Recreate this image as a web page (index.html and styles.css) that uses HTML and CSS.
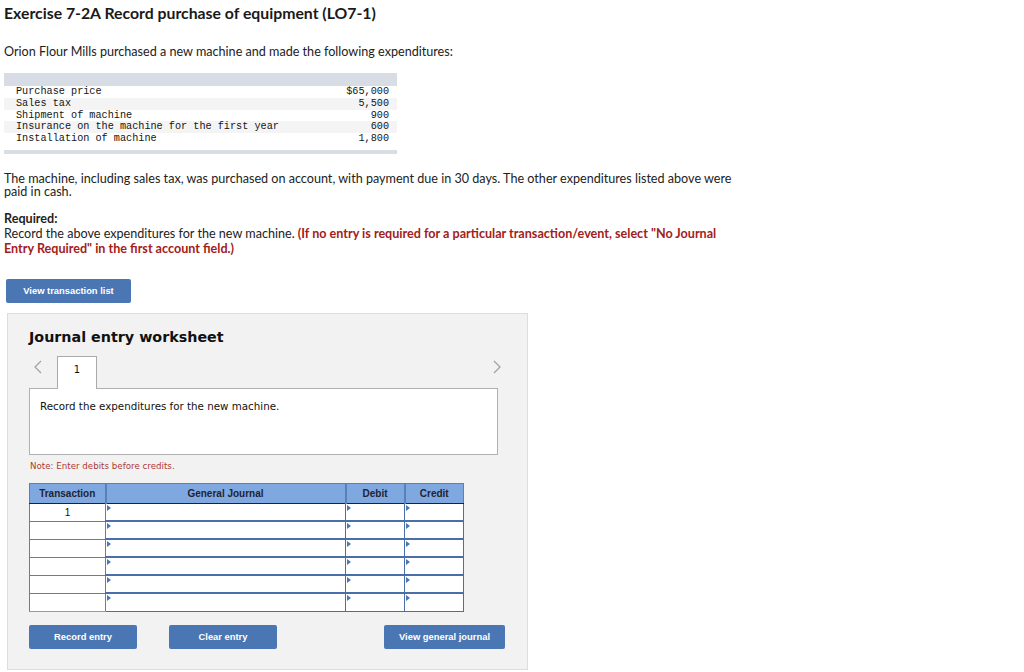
FILE: index.html
```html
<!DOCTYPE html>
<html lang="en">
<head>
<meta charset="utf-8">
<title>Exercise 7-2A Record purchase of equipment</title>
<link rel="stylesheet" href="styles.css">
</head>
<body>
<main class="page">
  <h1 class="title">Exercise 7-2A Record purchase of equipment (LO7-1)</h1>

  <p class="intro">Orion Flour Mills purchased a new machine and made the following expenditures:</p>

  <table class="costs">
    <thead><tr><th colspan="2"></th></tr></thead>
    <tbody>
      <tr><td>Purchase price</td><td class="amt">$65,000</td></tr>
      <tr><td>Sales tax</td><td class="amt">5,500</td></tr>
      <tr><td>Shipment of machine</td><td class="amt">900</td></tr>
      <tr><td>Insurance on the machine for the first year</td><td class="amt">600</td></tr>
      <tr><td>Installation of machine</td><td class="amt">1,800</td></tr>
    </tbody>
    <tfoot><tr><td colspan="2"></td></tr></tfoot>
  </table>

  <p class="body-text">The machine, including sales tax, was purchased on account, with payment due in 30 days. The other expenditures listed above were paid in cash.</p>

  <div class="body-text required">
    <strong class="req-label">Required:</strong>
    <p class="req-text">Record the above expenditures for the new machine. <span class="hint">(If no entry is required for a particular transaction/event, select "No Journal Entry Required" in the first account field.)</span></p>
  </div>

  <button class="btn btn-list" type="button">View transaction list</button>

  <section class="worksheet">
    <h2 class="ws-title">Journal entry worksheet</h2>

    <div class="ws-nav">
      <span class="arrow arrow-prev">
        <svg width="9" height="14" viewBox="0 0 9 14"><polyline points="8,1 2,7 8,13" fill="none" stroke="#a0a0a0" stroke-width="1.2"/></svg>
      </span>
      <span class="tab">1</span>
      <span class="arrow arrow-next">
        <svg width="9" height="14" viewBox="0 0 9 14"><polyline points="1,1 7,7 1,13" fill="none" stroke="#a0a0a0" stroke-width="1.2"/></svg>
      </span>
    </div>

    <div class="ws-box">Record the expenditures for the new machine.</div>

    <p class="note">Note: Enter debits before credits.</p>

    <table class="journal">
      <thead>
        <tr>
          <th class="c-tr">Transaction</th>
          <th class="c-gj">General Journal</th>
          <th class="c-dr">Debit</th>
          <th class="c-cr">Credit</th>
        </tr>
      </thead>
      <tbody>
        <tr><td class="tr">1</td><td class="in"><i></i></td><td class="in"><i></i></td><td class="in"><i></i></td></tr>
        <tr><td class="tr"></td><td class="in"><i></i></td><td class="in"><i></i></td><td class="in"><i></i></td></tr>
        <tr><td class="tr"></td><td class="in"><i></i></td><td class="in"><i></i></td><td class="in"><i></i></td></tr>
        <tr><td class="tr"></td><td class="in"><i></i></td><td class="in"><i></i></td><td class="in"><i></i></td></tr>
        <tr><td class="tr"></td><td class="in"><i></i></td><td class="in"><i></i></td><td class="in"><i></i></td></tr>
        <tr><td class="tr"></td><td class="in"><i></i></td><td class="in"><i></i></td><td class="in"><i></i></td></tr>
      </tbody>
    </table>

    <div class="ws-actions">
      <button class="btn btn-record" type="button">Record entry</button>
      <button class="btn btn-clear" type="button">Clear entry</button>
      <button class="btn btn-gj" type="button">View general journal</button>
    </div>
  </section>
</main>
</body>
</html>
```

FILE: styles.css
```css
* { box-sizing: border-box; }

html, body {
  margin: 0;
  padding: 0;
  background: #ffffff;
}

body {
  font-family: "Lato", "Open Sans", sans-serif;
  color: #222222;
}

.page {
  padding: 3px 0 0 4px;
}

.title {
  margin: 0;
  font-size: 15.8px;
  line-height: 20px;
  font-weight: 700;
  color: #1a1a1a;
}

.intro {
  margin: 21px 0 0;
  font-size: 12.6px;
  line-height: 15px;
}

/* cost listing */
.costs {
  margin-top: 14px;
  width: 393px;
  border-collapse: collapse;
  font-family: "Liberation Mono", "Courier New", monospace;
  font-size: 10.2px;
  color: #151515;
}
.costs thead th {
  height: 13px;
  padding: 0;
  background: #d8dce4;
}
.costs tbody td {
  height: 11.8px;
  padding: 1px 0 0 12px;
  line-height: 10.8px;
  white-space: pre;
}
.costs tbody tr:nth-child(even) td { background: #f4f4f4; }
.costs tbody td.amt {
  text-align: right;
  padding: 1px 8px 0 0;
}
.costs tfoot td {
  height: 7px;
  padding: 0;
  border-bottom: 4px solid #d8dce4;
}

.body-text {
  margin: 18px 0 0;
  max-width: 752px;
  font-size: 12.6px;
  line-height: 13px;
}
.required {
  margin-top: 13px;
  max-width: 728px;
  line-height: 15px;
}
.req-label {
  display: block;
  font-weight: 700;
}
.req-text { margin: 0; }
.hint {
  color: #a3201a;
  font-weight: 700;
}

/* buttons */
.btn {
  display: inline-flex;
  align-items: center;
  justify-content: center;
  height: 24px;
  padding: 0;
  border: 0;
  border-radius: 2px;
  background: #4a76b4;
  color: #ffffff;
  font-family: "Liberation Sans", Arial, sans-serif;
  font-size: 9.4px;
  font-weight: 700;
}
.btn-list {
  display: flex;
  margin: 23px 0 0 2px;
  width: 125px;
}

/* worksheet panel */
.worksheet {
  margin: 10px 0 0 3px;
  width: 521px;
  height: 357px;
  padding: 0 0 0 21px;
  background: #f2f2f2;
  border: 1px solid #dddddd;
}

.ws-title {
  margin: 15px 0 0;
  font-family: "DejaVu Sans", Verdana, sans-serif;
  font-size: 14.3px;
  line-height: 17px;
  font-weight: 700;
  color: #111111;
}

.ws-nav {
  display: flex;
  align-items: flex-end;
  width: 473px;
  margin-top: 9px;
  height: 33px;
}
.arrow {
  display: flex;
  align-items: center;
  height: 33px;
  padding-bottom: 9px;
}
.arrow-prev {
  width: 28px;
  padding-left: 4px;
}
.arrow-next {
  margin-left: auto;
}
.tab {
  width: 40px;
  height: 33px;
  margin-bottom: -1px;
  position: relative;
  z-index: 1;
  display: flex;
  justify-content: center;
  padding-top: 7px;
  background: #ffffff;
  border: 1px solid #aaaaaa;
  border-bottom: 0;
  font-family: "DejaVu Sans", Verdana, sans-serif;
  font-size: 10px;
  color: #111111;
}

.ws-box {
  width: 469px;
  height: 67px;
  padding: 11px 10px;
  background: #ffffff;
  border: 1px solid #b0b0b0;
  font-family: "DejaVu Sans", Verdana, sans-serif;
  font-size: 10.3px;
  line-height: 13px;
  color: #111111;
}

.note {
  margin: 6px 0 0 1px;
  font-family: "DejaVu Sans", Verdana, sans-serif;
  font-size: 8.7px;
  line-height: 11px;
  color: #b03a32;
}

/* journal grid */
.journal {
  margin-top: 11px;
  border-collapse: collapse;
  table-layout: fixed;
  width: 434px;
  font-family: "Liberation Sans", Arial, sans-serif;
  font-size: 10px;
}
.journal th {
  height: 20px;
  padding: 0;
  background: #80a8e0;
  border: 1px solid #6e7e96;
  border-bottom: 1px solid #222222;
  border-left: 2px solid #5a80b8;
  font-weight: 700;
  color: #1e2430;
}
.journal th.c-tr { border-left: 1px solid #7a7a7a; }
.c-tr { width: 76px; }
.c-gj { width: 240px; }
.c-dr { width: 59px; }
.c-cr { width: 59px; }

.journal td {
  height: 18px;
  padding: 0;
  background: #ffffff;
}
.journal td.tr {
  border: 1px solid #7a7a7a;
  text-align: center;
  vertical-align: top;
  padding-top: 3px;
  color: #111111;
}
.journal td.in {
  position: relative;
  border-top: 2px solid #4a6fa8;
  border-left: 1px solid #4a6fa8;
  border-right: 1px solid #4a6fa8;
  border-bottom: 1px solid #8aa4cc;
}
.journal tbody tr:first-child td.in { border-top-width: 1px; }
.journal tbody tr:last-child td.in { border-bottom: 1px solid #4a6fa8; }
.journal tbody tr:last-child td.tr { border-bottom: 1px solid #9a9a9a; }

/* dropdown marker in each entry cell */
.journal td.in i {
  position: absolute;
  left: 1px;
  top: 1px;
  width: 0;
  height: 0;
  border-top: 3px solid transparent;
  border-bottom: 3px solid transparent;
  border-left: 4px solid #4a76b4;
}

.ws-actions {
  display: flex;
  margin-top: 13px;
}
.btn-record { width: 108px; }
.btn-clear { width: 108px; margin-left: 32px; }
.btn-gj { width: 121px; margin-left: 107px; }
```
